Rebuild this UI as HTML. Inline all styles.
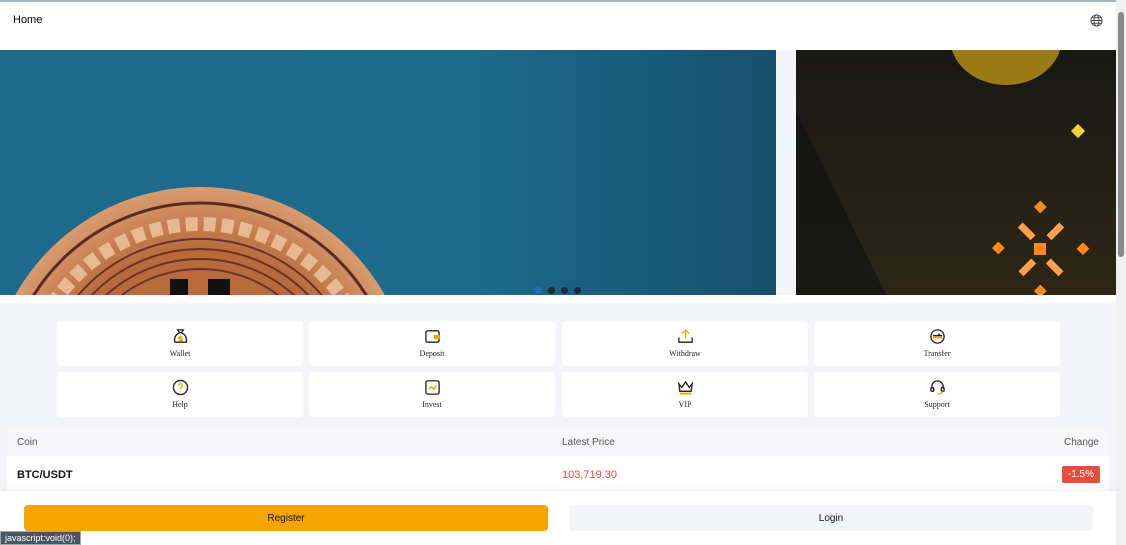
<!DOCTYPE html>
<html><head><meta charset="utf-8"><style>
*{margin:0;padding:0;box-sizing:border-box}
html,body{width:1126px;height:545px;overflow:hidden}
body{background:#f4f5fa;font-family:"Liberation Sans",sans-serif;position:relative}
.top{position:absolute;left:0;top:0;width:1116px;height:50px;background:#fff;border-top:2px solid #a9b3bf}
.top .t{position:absolute;left:13px;top:12px;font-size:11px;color:#000}
.b1{position:absolute;left:0;top:50px;width:776px;height:245px;background:linear-gradient(90deg,#1e6a8c,#1d6b8c 60%,#174f6e);overflow:hidden}
.b2{position:absolute;left:796px;top:50px;width:320px;height:245px;background:linear-gradient(180deg,#181814,#2e2716);overflow:hidden}
.band{position:absolute;left:0;top:295px;width:1116px;height:8px;background:#fff}
.dots{position:absolute;top:287px;left:535px;display:flex;gap:6px}
.dots i{display:block;width:7px;height:7px;border-radius:50%;background:#1b2b38}
.grid{position:absolute;left:57px;top:321px;width:1003px}
.c{position:absolute;width:246px;height:45px;background:#fff;border-radius:4px;text-align:center;font-family:"Liberation Serif",serif;font-size:8px;color:#222}
.c svg{display:block;margin:7px auto 4px}
.tbl{position:absolute;left:7px;top:427px;width:1102px;height:64px;background:#fff}
.th{height:29px;background:#f7f7f9;font-size:10px;color:#555;position:relative}
.th span,.tr span{position:absolute;top:10px}
.tr{position:relative;height:35px}
.foot{position:absolute;left:0;top:491px;width:1116px;height:54px;background:#fff;box-shadow:0 -2px 4px rgba(0,0,0,.05)}
.btn{position:absolute;top:14px;height:26px;border-radius:4px;font-size:10px;text-align:center;line-height:28px;color:#111}
.sb{position:absolute;right:0;top:0;width:10px;height:545px;background:#f0f0f0}
.sb div{position:absolute;left:2px;top:12px;width:6px;height:245px;background:#8a8a8a;border-radius:3px}
.st{position:absolute;left:0;top:531px;height:14px;background:#4a5562;color:#fff;font-size:9px;padding:1px 4px;border:1px solid #9aa;line-height:11px}
</style></head><body>
<div class="top"><span class="t">Home</span>
<svg style="position:absolute;right:13px;top:12px" width="13" height="13" viewBox="0 0 14 14" fill="none" stroke="#444" stroke-width="1"><circle cx="7" cy="7" r="6"/><ellipse cx="7" cy="7" rx="2.6" ry="6"/><path d="M1 7h12M2 4h10M2 10h10"/></svg></div>
<div class="b1">
<svg width="776" height="245" style="position:absolute;left:0;top:0">
<defs><radialGradient id="g" cx="50%" cy="50%" r="50%"><stop offset="0.7" stop-color="#b86a3c"/><stop offset="1" stop-color="#d89c70"/></radialGradient></defs>
<circle cx="200" cy="349" r="212" fill="url(#g)"/>
<circle cx="200" cy="349" r="196" fill="none" stroke="#5a2a20" stroke-width="3"/>
<circle cx="200" cy="349" r="175" fill="none" stroke="#e8b890" stroke-width="14" stroke-dasharray="12 6"/>
<circle cx="200" cy="349" r="160" fill="none" stroke="#6a3424" stroke-width="2"/>
<circle cx="200" cy="349" r="150" fill="none" stroke="#6a3424" stroke-width="2"/>
<circle cx="200" cy="349" r="140" fill="none" stroke="#6a3424" stroke-width="2"/>
<circle cx="200" cy="349" r="130" fill="none" stroke="#6a3424" stroke-width="2"/>
<rect x="170" y="229" width="18" height="16" fill="#111"/><rect x="208" y="229" width="22" height="16" fill="#111"/>
</svg></div>
<div class="b2"><svg width="320" height="245">
<path d="M0 60 L90 245 L0 245Z" fill="#0f1214" opacity=".7"/>
<ellipse cx="210" cy="-12" rx="56" ry="47" fill="#9a7a14"/>
<rect x="277" y="76" width="10" height="10" fill="#f5cf3a" transform="rotate(45 282 81)"/>
<g fill="#ff8a1a"><rect x="240" y="153" width="9" height="9" transform="rotate(45 245 157)"/><rect x="238" y="193" width="12" height="12"/><rect x="198" y="194" width="9" height="9" transform="rotate(45 203 198)"/><rect x="283" y="194" width="9" height="9" transform="rotate(45 287 198)"/><rect x="240" y="237" width="9" height="9" transform="rotate(45 245 241)"/></g>
<g fill="#ffa04a"><rect x="222" y="178" width="18" height="7" transform="rotate(45 231 181)"/><rect x="250" y="178" width="18" height="7" transform="rotate(-45 259 181)"/><rect x="222" y="214" width="18" height="7" transform="rotate(-45 231 217)"/><rect x="250" y="214" width="18" height="7" transform="rotate(45 259 217)"/></g>
</svg></div>
<div class="band"></div>
<div class="dots"><i style="background:#1a6fd0"></i><i></i><i></i><i></i></div>
<div class="grid">
<div class="c" style="left:0;top:0"><svg width="17" height="17" viewBox="0 0 18 18" fill="none" stroke="#222" stroke-width="1.4"><path d="M6 2h6l-2 3H8zM8 5C3 7 2 12 3 15h12c1-3 0-8-5-10"/><path d="M9 8v6M11 9.5H8a1 1 0 000 2h2a1 1 0 010 2H7" stroke="#f5a300"/></svg>Wallet</div>
<div class="c" style="left:252px;top:0"><svg width="17" height="17" viewBox="0 0 18 18" fill="none" stroke="#222" stroke-width="1.4"><rect x="2" y="3" width="14" height="12" rx="2"/><rect x="11" y="8" width="5" height="3" fill="#f5a300" stroke="#f5a300"/></svg>Deposit</div>
<div class="c" style="left:505px;top:0"><svg width="17" height="17" viewBox="0 0 18 18" fill="none" stroke-width="1.4"><path d="M9 11V2M5 6l4-4 4 4" stroke="#f5a300"/><path d="M2 10v5h14v-5" stroke="#222"/></svg>Withdraw</div>
<div class="c" style="left:757px;top:0"><svg width="17" height="17" viewBox="0 0 18 18" fill="none" stroke-width="1.4"><circle cx="9" cy="9" r="7" stroke="#222"/><path d="M4 8h10M10 6l2 2" stroke="#222"/><path d="M4 10h10" stroke="#f5a300" stroke-width="2"/></svg>Transfer</div>
<div class="c" style="left:0;top:51px"><svg width="17" height="17" viewBox="0 0 18 18" fill="none" stroke-width="1.4"><circle cx="9" cy="9" r="7.5" stroke="#222"/><path d="M7 7a2 2 0 114 0c0 1.5-2 1.5-2 3.5M9 12.5v1" stroke="#f5a300"/></svg>Help</div>
<div class="c" style="left:252px;top:51px"><svg width="17" height="17" viewBox="0 0 18 18" fill="none" stroke-width="1.4"><rect x="2" y="2" width="14" height="14" rx="2" stroke="#222"/><path d="M5 11l2.5-3 3 3L13 7" stroke="#f5a300"/></svg>Invest</div>
<div class="c" style="left:505px;top:51px"><svg width="17" height="17" viewBox="0 0 18 18" fill="none" stroke-width="1.4"><path d="M2 5l3 4 4-6 4 6 3-4-1 8H3z" stroke="#222"/><path d="M3 15.5h12" stroke="#f5a300" stroke-width="2"/></svg>VIP</div>
<div class="c" style="left:757px;top:51px"><svg width="17" height="17" viewBox="0 0 18 18" fill="none" stroke-width="1.4"><path d="M3 10V8a6 6 0 0112 0v2" stroke="#222"/><rect x="2" y="9" width="3" height="4" rx="1" stroke="#222"/><rect x="13" y="9" width="3" height="4" rx="1" stroke="#222"/><path d="M14 13c0 2-2 3-5 3" stroke="#f5a300"/></svg>Support</div>
</div>
<div class="tbl">
<div class="th"><span style="left:10px">Coin</span><span style="left:555px">Latest Price</span><span style="right:10px">Change</span></div>
<div class="tr"><span style="left:10px;top:13px;font-weight:bold;font-size:11px;color:#111">BTC/USDT</span><span style="left:555px;top:13px;font-size:11px;color:#e54d3c">103,719.30</span><span style="right:9px;top:10px;background:#e54d3c;color:#fff;font-size:10px;padding:3px 6px;border-radius:2px">-1.5%</span></div>
</div>
<div class="foot">
<div class="btn" style="left:24px;width:524px;background:#f6a500">Register</div>
<div class="btn" style="left:569px;width:524px;background:#f4f5f9">Login</div>
</div>
<div class="st">javascript:void(0);</div>
<div class="sb"><div></div></div>
</body></html>
